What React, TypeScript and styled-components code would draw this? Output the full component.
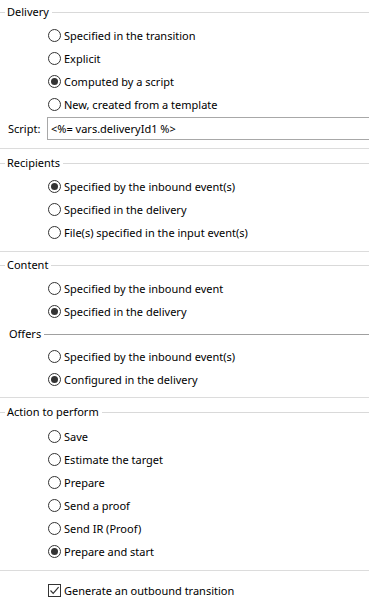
import React from 'react';
import styled, {createGlobalStyle} from "styled-components";

const GlobalStyle = createGlobalStyle`
  html, body {
    margin: 0;
    padding: 0;
    background: #fff;
  }
  body {
    font-family: "Noto Sans", "Open Sans", sans-serif;
    font-size: 11px;
    color: #000;
  }
`;

const Page = styled.div`
  width: 369px;
  display: flex;
  flex-direction: column;
`;

const GroupHeader = styled.div<{ $height?: number; $dark?: boolean }>`
  display: flex;
  align-items: center;
  height: ${p => p.$height ?? 24}px;
  padding-left: ${p => p.$dark ? 9 : 0}px;

  &::before {
    content: "";
    display: ${p => p.$dark ? "none" : "block"};
    width: 5px;
    height: 1px;
    margin-right: 2px;
    background: #d9d9d9;
  }

  &::after {
    content: "";
    flex: 1;
    height: 1px;
    margin-left: 3px;
    background: ${p => p.$dark ? "#a0a0a0" : "#d9d9d9"};
  }
`;

const GroupLabel = styled.span`
  line-height: 16px;
`;

const Options = styled.div<{ $top?: number }>`
  display: flex;
  flex-direction: column;
  padding-left: 48px;
  padding-top: ${p => p.$top ?? 0}px;
`;

const OptionRow = styled.label`
  display: flex;
  align-items: center;
  height: 23px;
  gap: 3px;
  white-space: nowrap;
`;

const RadioCircle = styled.span<{ $checked?: boolean }>`
  width: 11px;
  height: 11px;
  border: 1px solid #333;
  border-radius: 50%;
  background: #fff;
  display: flex;
  align-items: center;
  justify-content: center;
  flex: none;

  &::after {
    content: "";
    display: ${p => p.$checked ? "block" : "none"};
    width: 7px;
    height: 7px;
    border-radius: 50%;
    background: #333;
  }
`;

const CheckBox = styled.span`
  width: 11px;
  height: 11px;
  border: 1px solid #333;
  background: #fff;
  display: flex;
  align-items: center;
  justify-content: center;
  flex: none;
`;

const ScriptRow = styled.div`
  display: flex;
  align-items: center;
  margin-top: 1px;
  height: 23px;
`;

const ScriptLabel = styled.span`
  width: 39px;
  padding-left: 8px;
  flex: none;
`;

const ScriptInput = styled.div`
  flex: 1;
  height: 21px;
  border: 1px solid #a8a8a8;
  border-right: none;
  display: flex;
  align-items: center;
  padding-left: 3px;
`;

const Separator = styled.div<{ $top: number; $bottom?: number }>`
  height: 1px;
  background: #dcdcdc;
  margin-top: ${p => p.$top}px;
  margin-bottom: ${p => p.$bottom ?? 1}px;
`;

type Opt = { label: string; checked?: boolean };

const Radios = ({items}: { items: Opt[] }) => (
  <Options>
    {items.map(it => (
      <OptionRow key={it.label}>
        <RadioCircle $checked={it.checked}/>
        {it.label}
      </OptionRow>
    ))}
  </Options>
);

const App = () => {
  return (
    <Page>
      <GlobalStyle/>
      <GroupHeader><GroupLabel>Delivery</GroupLabel></GroupHeader>
      <Radios items={[
        {label: "Specified in the transition"},
        {label: "Explicit"},
        {label: "Computed by a script", checked: true},
        {label: "New, created from a template"},
      ]}/>
      <ScriptRow>
        <ScriptLabel>Script:</ScriptLabel>
        <ScriptInput>&lt;%= vars.deliveryId1 %&gt;</ScriptInput>
      </ScriptRow>

      <Separator $top={8} $bottom={2}/>
      <GroupHeader><GroupLabel>Recipients</GroupLabel></GroupHeader>
      <Radios items={[
        {label: "Specified by the inbound event(s)", checked: true},
        {label: "Specified in the delivery"},
        {label: "File(s) specified in the input event(s)"},
      ]}/>

      <Separator $top={7}/>
      <GroupHeader><GroupLabel>Content</GroupLabel></GroupHeader>
      <Radios items={[
        {label: "Specified by the inbound event"},
        {label: "Specified in the delivery", checked: true},
      ]}/>
      <GroupHeader $height={22} $dark><GroupLabel>Offers</GroupLabel></GroupHeader>
      <Radios items={[
        {label: "Specified by the inbound event(s)"},
        {label: "Configured in the delivery", checked: true},
      ]}/>

      <Separator $top={6}/>
      <GroupHeader $height={26}><GroupLabel>Action to perform</GroupLabel></GroupHeader>
      <Radios items={[
        {label: "Save"},
        {label: "Estimate the target"},
        {label: "Prepare"},
        {label: "Send a proof"},
        {label: "Send IR (Proof)"},
        {label: "Prepare and start", checked: true},
      ]}/>

      <Separator $top={7}/>
      <Options $top={7}>
        <OptionRow>
          <CheckBox>
            <svg width="11" height="11" viewBox="0 0 11 11">
              <path d="M1.5 5.5 L4.2 8.3 L9.6 2.2" fill="none" stroke="#333" strokeWidth="1.2"/>
            </svg>
          </CheckBox>
          Generate an outbound transition
        </OptionRow>
      </Options>
    </Page>
  );
};

export default App;
